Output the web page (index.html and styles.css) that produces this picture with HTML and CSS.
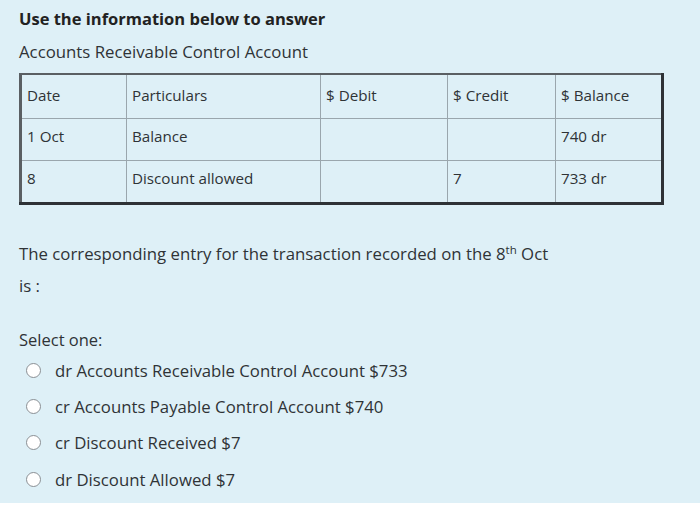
FILE: index.html
```html
<!DOCTYPE html>
<html>
<head>
<meta charset="utf-8">
<link rel="stylesheet" href="styles.css">
</head>
<body>
<div class="page">
  <div class="title">Use the information below to answer</div>
  <div class="subtitle">Accounts Receivable Control Account</div>
  <table class="ledger">
    <colgroup>
      <col class="c1"><col class="c2"><col class="c3"><col class="c4"><col class="c5">
    </colgroup>
    <tr class="head">
      <td>Date</td><td>Particulars</td><td>$ Debit</td><td>$ Credit</td><td>$ Balance</td>
    </tr>
    <tr>
      <td>1 Oct</td><td>Balance</td><td></td><td></td><td>740 dr</td>
    </tr>
    <tr>
      <td>8</td><td>Discount allowed</td><td></td><td>7</td><td>733 dr</td>
    </tr>
  </table>
  <p class="question">The corresponding entry for the transaction recorded on the 8<sup>th</sup> Oct<br>is :</p>
  <div class="select">Select one:</div>
  <ul class="options">
    <li><span class="radio"></span>dr Accounts Receivable Control Account $733</li>
    <li><span class="radio"></span>cr Accounts Payable Control Account $740</li>
    <li><span class="radio"></span>cr Discount Received $7</li>
    <li><span class="radio"></span>dr Discount Allowed $7</li>
  </ul>
</div>
</body>
</html>
```
FILE: styles.css
```css
html, body {
  margin: 0;
  padding: 0;
  background: #ffffff;
}
.page {
  height: 503px;
  background: #def0f7;
  color: #2f3336;
  font-family: "Open Sans", "Noto Sans", sans-serif;
  font-size: 16px;
  padding: 8px 0 0 19px;
  box-sizing: border-box;
  overflow: hidden;
}
.title {
  font-weight: bold;
  font-size: 16.5px;
  line-height: 22px;
  color: #222;
}
.subtitle {
  font-size: 16.8px;
  line-height: 24px;
  margin-top: 10px;
}
.ledger {
  margin-top: 9px;
  border-collapse: collapse;
  width: 645px;
  border-top: 2px solid #5a5f63;
  border-left: 3px solid #5a5f63;
  border-right: 3px solid #2e3236;
  border-bottom: 3px solid #2e3236;
  table-layout: fixed;
}
.ledger col.c1 { width: 106px; }
.ledger col.c2 { width: 194px; }
.ledger col.c3 { width: 127px; }
.ledger col.c4 { width: 108px; }
.ledger col.c5 { width: 107px; }
.ledger td {
  border: 1px solid #9aa6ad;
  padding: 0 0 7px 5px;
  height: 34px;
  vertical-align: middle;
  font-size: 15.2px;
}
.ledger tr.head td {
  height: 39px;
  padding-bottom: 4px;
}
.question {
  margin: 33px 0 0 0;
  font-size: 16.8px;
  line-height: 32px;
}
.question sup {
  font-size: 11.5px;
  line-height: 0;
  vertical-align: 6px;
}
.select {
  margin-top: 26px;
  font-size: 16.5px;
  line-height: 24px;
}
.options {
  list-style: none;
  margin: 0;
  padding: 0;
}
.options li {
  display: flex;
  align-items: center;
  height: 36.3px;
  font-size: 16.75px;
}
.radio {
  width: 13px;
  height: 13px;
  border: 1px solid #8a8f94;
  border-radius: 50%;
  background: #ffffff;
  margin: 0 14px 0 7px;
  flex: none;
}
```
